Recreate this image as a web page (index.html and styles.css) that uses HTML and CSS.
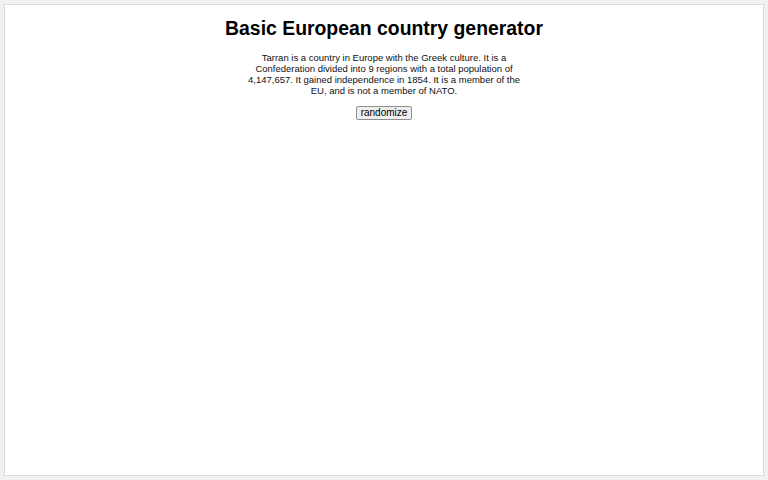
FILE: index.html
```html
<!DOCTYPE html>
<html lang="en">
<head>
<meta charset="utf-8">
<title>Basic European country generator</title>
<link rel="stylesheet" href="styles.css">
</head>
<body>
<main class="frame">
  <h1 class="title">Basic European country generator</h1>
  <p class="summary">Tarran is a country in Europe with the Greek culture. It is a Confederation divided into 9 regions with a total population of 4,147,657. It gained independence in 1854. It is a member of the EU, and is not a member of NATO.</p>
  <button class="randomize" type="button">randomize</button>
</main>
</body>
</html>
```
FILE: styles.css
```css
html, body {
  margin: 0;
  height: 100%;
}

body {
  background: #f1f1f1;
  padding: 4px;
  box-sizing: border-box;
  font-family: "Liberation Sans", Arial, sans-serif;
  color: #000;
}

.frame {
  height: 100%;
  box-sizing: border-box;
  background: #fff;
  border: 1px solid #dcdcdc;
  display: flex;
  flex-direction: column;
  align-items: center;
  padding-top: 11px;
}

.title {
  margin: 0;
  font-size: 19.4px;
  line-height: 24px;
  font-weight: bold;
}

.summary {
  margin: 12px 0 0;
  width: 276px;
  font-size: 9.5px;
  line-height: 11px;
  text-align: center;
  color: #111;
}

.randomize {
  margin-top: 10px;
  font-family: "Liberation Sans", Arial, sans-serif;
  font-size: 10px;
  line-height: 12px;
  padding: 0 4px;
  background: #efefef;
  border: 1px solid #8f8f8f;
  border-radius: 2px;
  color: #000;
}
```
